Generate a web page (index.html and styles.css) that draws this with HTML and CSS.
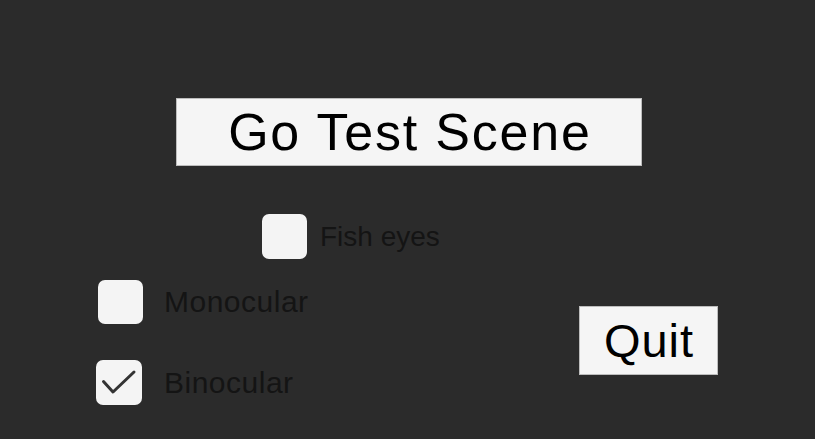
FILE: index.html
```html
<!DOCTYPE html>
<html>
<head>
<meta charset="utf-8">
<link rel="stylesheet" href="styles.css">
</head>
<body>
<main class="screen">
  <div class="btn btn-go">Go Test Scene</div>
  <label class="toggle toggle-fish">
    <span class="box"></span>
    <span class="label label-small">Fish eyes</span>
  </label>
  <div class="lower">
    <div class="toggles">
      <label class="toggle toggle-mono">
        <span class="box"></span>
        <span class="label">Monocular</span>
      </label>
      <label class="toggle toggle-bino">
        <span class="box">
          <svg class="check" viewBox="0 0 46 45" width="46" height="45"><path d="M7.5 21.5 L17 32 L38 12" fill="none" stroke="#333" stroke-width="3" stroke-linecap="round" stroke-linejoin="round"/></svg>
        </span>
        <span class="label">Binocular</span>
      </label>
    </div>
    <div class="btn btn-quit">Quit</div>
  </div>
</main>
</body>
</html>
```

FILE: styles.css
```css
html, body {
  margin: 0;
  padding: 0;
  background: #2b2b2b;
  width: 815px;
  height: 439px;
  overflow: hidden;
  font-family: "Liberation Sans", Arial, sans-serif;
}
.screen {
  padding-top: 98px;
  display: flex;
  flex-direction: column;
  align-items: flex-start;
}
.btn {
  background: #f5f5f5;
  color: #000;
  display: flex;
  align-items: center;
  justify-content: center;
  box-sizing: border-box;
  border: 1px solid #bdbdbd;
}
.btn-go {
  margin-left: 176px;
  width: 466px;
  height: 68px;
  font-size: 52px;
  letter-spacing: 1.8px;
  text-indent: 1.8px;
}
.toggle {
  display: flex;
  align-items: center;
}
.box {
  width: 45px;
  height: 45px;
  background: #f4f4f4;
  border-radius: 7px;
  display: block;
  flex: none;
}
.check {
  display: block;
}
.label {
  color: #141414;
  font-size: 30px;
  letter-spacing: 0.5px;
  margin-left: 21px;
}
.label-small {
  font-size: 28px;
  letter-spacing: 0;
  margin-left: 13px;
}
.toggle-fish {
  margin-top: 48px;
  margin-left: 262px;
}
.lower {
  display: flex;
  align-items: flex-start;
  margin-top: 21px;
  padding-left: 96px;
}
.toggles {
  width: 483px;
  display: flex;
  flex-direction: column;
  align-items: flex-start;
}
.toggle-mono {
  margin-left: 2px;
}
.toggle-mono .box {
  height: 44px;
}
.toggle-bino {
  margin-top: 36px;
}
.toggle-bino .box {
  width: 46px;
}
.toggle-bino .label {
  margin-left: 22px;
}
.btn-quit {
  margin-top: 26px;
  width: 139px;
  height: 69px;
  font-size: 47px;
  letter-spacing: 1px;
  text-indent: 1px;
}
```
